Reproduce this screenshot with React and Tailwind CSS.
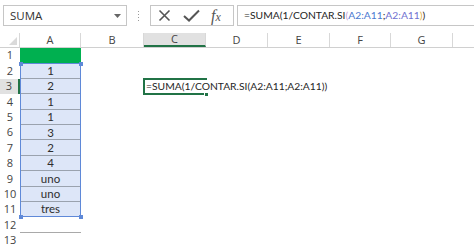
import React from 'react';

const cols = [
  { id: 'A', w: 61 },
  { id: 'B', w: 63 },
  { id: 'C', w: 62 },
  { id: 'D', w: 62 },
  { id: 'E', w: 62 },
  { id: 'F', w: 61 },
  { id: 'G', w: 62 },
];

const valores = ['1', '2', '1', '1', '3', '2', '4', 'uno', 'uno', 'tres'];

const cellFont = { fontFamily: 'Lato, "Liberation Sans", sans-serif' };
const uiFont = { fontFamily: '"Open Sans", "Noto Sans", sans-serif' };

function Formula() {
  return (
    <>
      <span>=SUMA(1/CONTAR.SI</span>
      <span className="text-[#c9a3d6]">(</span>
      <span className="text-[#4a78d0]">A2:A11</span>
      <span>;</span>
      <span className="text-[#6f6fd0]">A2:A11</span>
      <span className="text-[#e0b24a]">)</span>
      <span>)</span>
    </>
  );
}

function Toolbar() {
  return (
    <div className="flex items-center h-[33px] pb-[2px] bg-white">
      <div className="shrink-0 ml-[3px] w-[124px] h-[21px] border border-[#c6c6c6] flex items-center justify-between pl-[6px] pr-[5px] text-[11.5px] text-[#333]" style={uiFont}>
        <span>SUMA</span>
        <svg width="7" height="4" viewBox="0 0 7 4">
          <path d="M0 0 L7 0 L3.5 4 Z" fill="#666" />
        </svg>
      </div>
      <div className="shrink-0 w-[23px] flex flex-col items-center gap-[2px]">
        <span className="w-[1px] h-[1px] bg-[#9a9a9a]" />
        <span className="w-[1px] h-[1px] bg-[#9a9a9a]" />
        <span className="w-[1px] h-[1px] bg-[#9a9a9a]" />
        <span className="w-[1px] h-[1px] bg-[#9a9a9a]" />
      </div>
      <div className="shrink-0 w-[84px] h-[21px] border border-[#c6c6c6] flex items-center">
        <svg className="ml-[7px]" width="13" height="13" viewBox="0 0 13 13">
          <path d="M1.5 1.5 L11.5 11.5 M11.5 1.5 L1.5 11.5" stroke="#555" strokeWidth="1.6" />
        </svg>
        <svg className="ml-[12px]" width="17" height="13" viewBox="0 0 17 13">
          <path d="M1 7 L6 11.5 L16 1.5" stroke="#555" strokeWidth="2" fill="none" />
        </svg>
        <span className="ml-[11px] text-[16px] leading-none italic text-[#555]" style={{ fontFamily: '"Liberation Serif", serif' }}>
          f<span className="text-[12px]">x</span>
        </span>
      </div>
      <div className="ml-[3px] flex-1 h-[21px] border border-r-0 border-[#c6c6c6] flex items-center pl-[6px] text-[10.3px] whitespace-nowrap text-[#1e1e1e]" style={cellFont}>
        <Formula />
      </div>
    </div>
  );
}

function HeaderRow() {
  return (
    <div className="flex h-[15px] border-b border-[#d0d0d0] bg-white text-[11px] text-[#444]" style={uiFont}>
      <div className="shrink-0 w-[20px] relative border-r border-[#d8d8d8]">
        <svg className="absolute right-[2px] bottom-[2px]" width="8" height="8" viewBox="0 0 8 8">
          <path d="M8 0 L8 8 L0 8 Z" fill="#dadada" />
        </svg>
      </div>
      {cols.map((c) => (
        <div
          key={c.id}
          className={
            c.id === 'C'
              ? 'shrink-0 flex items-center justify-center bg-[#e1e1e1] border-b-2 border-[#217346] border-r border-r-[#d8d8d8]'
              : 'shrink-0 flex items-center justify-center border-r border-[#d8d8d8]'
          }
          style={{ width: c.w }}
        >
          {c.id}
        </div>
      ))}
      <div className="flex-1" />
    </div>
  );
}

function Row({ n }) {
  const isActive = n === 3;
  let aCell = 'bg-white';
  if (n === 1) aCell = 'bg-[#00b050]';
  else if (n >= 2 && n <= 11) aCell = 'bg-[#dde6f8] border-b border-[#9aa2ae]';
  else if (n === 12) aCell = 'bg-white border-b border-[#a9a9a9]';

  return (
    <div className="flex h-[15.4px] bg-white">
      <div
        className={
          isActive
            ? 'shrink-0 w-[20px] flex items-center justify-center bg-[#e1e1e1] border-r-2 border-[#217346] text-[11px] text-[#444]'
            : 'shrink-0 w-[20px] flex items-center justify-center text-[11px] text-[#444]'
        }
        style={uiFont}
      >
        {n}
      </div>
      <div
        className={`shrink-0 flex items-center justify-center text-[11.5px] text-[#2e2e2e] ${aCell}`}
        style={{ width: 61, ...cellFont }}
      >
        {n >= 2 && n <= 11 ? valores[n - 2] : ''}
      </div>
      <div className="shrink-0" style={{ width: 63 }} />
      <div className="shrink-0 relative" style={{ width: 62 }}>
        {isActive && (
          <>
            <div className="absolute -left-[1px] -top-[1px] -right-[1px] -bottom-[1px] border-2 border-r-0 border-[#217346]" />
            <div className="absolute -right-[3px] -bottom-[3px] w-[5px] h-[5px] bg-[#217346] border border-white" />
            <div className="absolute left-[2px] top-0 h-full flex items-center whitespace-nowrap text-[10.3px] text-[#262626]" style={cellFont}>
              =SUMA(1/CONTAR.SI(A2:A11;A2:A11))
            </div>
          </>
        )}
      </div>
      <div className="flex-1" />
    </div>
  );
}

export default function App() {
  const rows = Array.from({ length: 13 }, (_, i) => i + 1);
  return (
    <div className="w-[474px] h-[244px] overflow-hidden bg-white select-none">
      <Toolbar />
      <HeaderRow />
      <div className="relative">
        {rows.map((n) => (
          <Row key={n} n={n} />
        ))}
        <div className="absolute left-[20px] top-[15.4px] w-[61px] h-[154px] border border-[#5f89d8] pointer-events-none" />
        <div className="absolute left-[19px] top-[14px] w-[4px] h-[4px] bg-[#5f89d8]" />
        <div className="absolute left-[79px] top-[14px] w-[4px] h-[4px] bg-[#5f89d8]" />
        <div className="absolute left-[19px] top-[167px] w-[4px] h-[4px] bg-[#5f89d8]" />
        <div className="absolute left-[79px] top-[167px] w-[4px] h-[4px] bg-[#5f89d8]" />
      </div>
    </div>
  );
}
